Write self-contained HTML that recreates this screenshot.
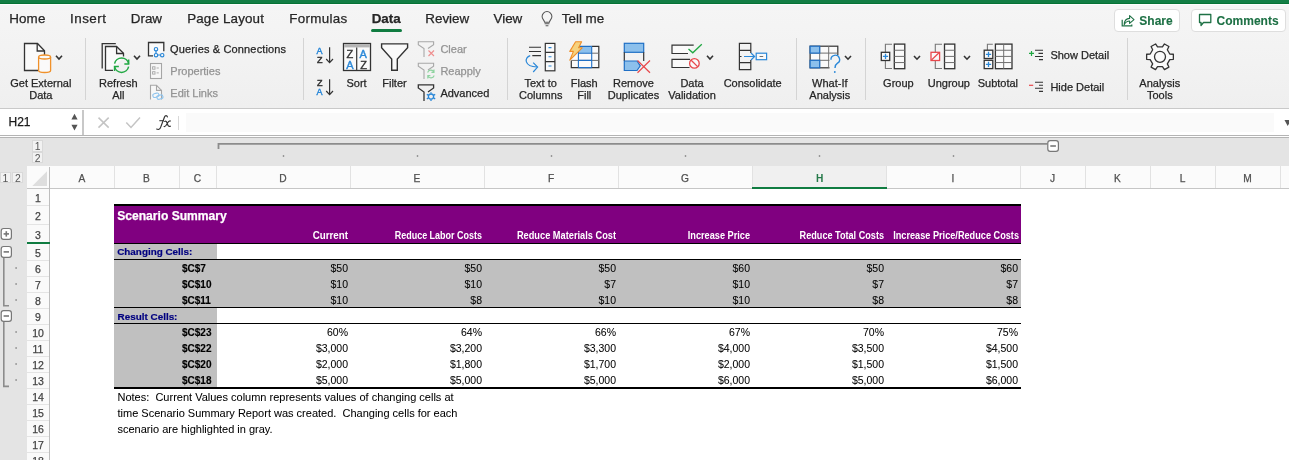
<!DOCTYPE html>
<html><head><meta charset="utf-8"><style>
html,body{margin:0;padding:0;}
body{width:1289px;height:460px;overflow:hidden;position:relative;background:#f3f3f3;font-family:"Liberation Sans", sans-serif;}
.t{position:absolute;white-space:pre;-webkit-text-stroke:0.25px currentColor;}
body{will-change:transform;}
.r{position:absolute;}
svg{position:absolute;left:0;top:0;}
</style></head><body>
<div class="r" style="left:0px;top:0px;width:1289px;height:3px;background:#137e45;"></div><div class="r" style="left:0px;top:3px;width:1289px;height:1px;background:#067335;"></div><div class="r" style="left:0px;top:4px;width:1289px;height:1px;background:#fdfdfd;"></div><div class="r" style="left:0px;top:5px;width:1289px;height:103px;background:linear-gradient(#f5f5f5,#f3f3f3 40%,#efefef);"></div><div class="r" style="left:0px;top:108px;width:1289px;height:1px;background:#c9c9c9;"></div><div class="r" style="left:0px;top:109px;width:1289px;height:26px;background:#ffffff;"></div><div class="r" style="left:0px;top:135px;width:1289px;height:1px;background:#b4b4b4;"></div><div class="r" style="left:0px;top:136px;width:1289px;height:1px;background:#ffffff;"></div><div class="r" style="left:0px;top:137px;width:1289px;height:1px;background:#b4b4b4;"></div><div class="r" style="left:0px;top:138px;width:1289px;height:322px;background:#e4e4e4;"></div><div class="t" style="left:9.20px;top:11.66px;width:400px;font-size:13.4px;line-height:13.4px;color:#262626;text-align:left;letter-spacing:0.15px;">Home</div><div class="t" style="left:70.00px;top:11.66px;width:400px;font-size:13.4px;line-height:13.4px;color:#262626;text-align:left;letter-spacing:0.5px;">Insert</div><div class="t" style="left:130.80px;top:11.66px;width:400px;font-size:13.4px;line-height:13.4px;color:#262626;text-align:left;">Draw</div><div class="t" style="left:187.20px;top:11.66px;width:400px;font-size:13.4px;line-height:13.4px;color:#262626;text-align:left;letter-spacing:0.15px;">Page Layout</div><div class="t" style="left:289.20px;top:11.66px;width:400px;font-size:13.4px;line-height:13.4px;color:#262626;text-align:left;letter-spacing:0.3px;">Formulas</div><div class="t" style="left:371.70px;top:11.66px;width:400px;font-size:13.4px;line-height:13.4px;color:#262626;text-align:left;font-weight:bold;">Data</div><div class="r" style="left:371px;top:29px;width:31px;height:3px;background:#107c41;border-radius:1.5px;"></div><div class="t" style="left:425.30px;top:11.66px;width:400px;font-size:13.4px;line-height:13.4px;color:#262626;text-align:left;">Review</div><div class="t" style="left:493.50px;top:11.66px;width:400px;font-size:13.4px;line-height:13.4px;color:#262626;text-align:left;">View</div><div class="t" style="left:561.80px;top:11.66px;width:400px;font-size:13.4px;line-height:13.4px;color:#262626;text-align:left;">Tell me</div><div class="r" style="left:1113.5px;top:8.5px;width:66px;height:23px;background:#ffffff;border:1px solid #dedede;border-radius:4px;box-sizing:border-box;"></div><div class="r" style="left:1190.5px;top:8.5px;width:95px;height:23px;background:#ffffff;border:1px solid #dedede;border-radius:4px;box-sizing:border-box;"></div><div class="t" style="left:1139.30px;top:15.04px;width:400px;font-size:12px;line-height:12px;color:#1e7145;text-align:left;font-weight:bold;-webkit-text-stroke:0.1px #1e7145;">Share</div><div class="t" style="left:1216.60px;top:15.04px;width:400px;font-size:12px;line-height:12px;color:#1e7145;text-align:left;font-weight:bold;-webkit-text-stroke:0.1px #1e7145;">Comments</div><div class="t" style="left:-19.20px;top:77.69px;width:120px;font-size:11px;line-height:11px;color:#262626;text-align:center;">Get External</div><div class="t" style="left:-19.20px;top:90.09px;width:120px;font-size:11px;line-height:11px;color:#262626;text-align:center;">Data</div><div class="t" style="left:58.30px;top:77.69px;width:120px;font-size:11px;line-height:11px;color:#262626;text-align:center;">Refresh</div><div class="t" style="left:58.30px;top:90.09px;width:120px;font-size:11px;line-height:11px;color:#262626;text-align:center;">All</div><div class="t" style="left:170.00px;top:43.59px;width:400px;font-size:11px;line-height:11px;color:#262626;text-align:left;letter-spacing:0.15px;">Queries &amp; Connections</div><div class="t" style="left:170.30px;top:65.79px;width:400px;font-size:11px;line-height:11px;color:#939393;text-align:left;">Properties</div><div class="t" style="left:170.30px;top:88.29px;width:400px;font-size:11px;line-height:11px;color:#939393;text-align:left;">Edit Links</div><div class="t" style="left:296.60px;top:77.69px;width:120px;font-size:11px;line-height:11px;color:#262626;text-align:center;">Sort</div><div class="t" style="left:334.50px;top:77.69px;width:120px;font-size:11px;line-height:11px;color:#262626;text-align:center;">Filter</div><div class="t" style="left:440.40px;top:44.19px;width:400px;font-size:11px;line-height:11px;color:#939393;text-align:left;">Clear</div><div class="t" style="left:440.40px;top:65.99px;width:400px;font-size:11px;line-height:11px;color:#939393;text-align:left;">Reapply</div><div class="t" style="left:440.40px;top:87.59px;width:400px;font-size:11px;line-height:11px;color:#262626;text-align:left;">Advanced</div><div class="t" style="left:480.70px;top:77.69px;width:120px;font-size:11px;line-height:11px;color:#262626;text-align:center;">Text to</div><div class="t" style="left:480.70px;top:90.09px;width:120px;font-size:11px;line-height:11px;color:#262626;text-align:center;">Columns</div><div class="t" style="left:524.30px;top:77.69px;width:120px;font-size:11px;line-height:11px;color:#262626;text-align:center;">Flash</div><div class="t" style="left:524.30px;top:90.09px;width:120px;font-size:11px;line-height:11px;color:#262626;text-align:center;">Fill</div><div class="t" style="left:573.50px;top:77.69px;width:120px;font-size:11px;line-height:11px;color:#262626;text-align:center;">Remove</div><div class="t" style="left:573.50px;top:90.09px;width:120px;font-size:11px;line-height:11px;color:#262626;text-align:center;">Duplicates</div><div class="t" style="left:632.00px;top:77.69px;width:120px;font-size:11px;line-height:11px;color:#262626;text-align:center;">Data</div><div class="t" style="left:632.00px;top:90.09px;width:120px;font-size:11px;line-height:11px;color:#262626;text-align:center;">Validation</div><div class="t" style="left:692.70px;top:77.69px;width:120px;font-size:11px;line-height:11px;color:#262626;text-align:center;">Consolidate</div><div class="t" style="left:769.80px;top:77.69px;width:120px;font-size:11px;line-height:11px;color:#262626;text-align:center;">What-If</div><div class="t" style="left:769.80px;top:90.09px;width:120px;font-size:11px;line-height:11px;color:#262626;text-align:center;">Analysis</div><div class="t" style="left:838.40px;top:77.69px;width:120px;font-size:11px;line-height:11px;color:#262626;text-align:center;">Group</div><div class="t" style="left:888.90px;top:77.69px;width:120px;font-size:11px;line-height:11px;color:#262626;text-align:center;">Ungroup</div><div class="t" style="left:937.90px;top:77.69px;width:120px;font-size:11px;line-height:11px;color:#262626;text-align:center;">Subtotal</div><div class="t" style="left:1050.40px;top:49.69px;width:400px;font-size:11px;line-height:11px;color:#262626;text-align:left;">Show Detail</div><div class="t" style="left:1050.40px;top:81.99px;width:400px;font-size:11px;line-height:11px;color:#262626;text-align:left;">Hide Detail</div><div class="t" style="left:1099.80px;top:77.69px;width:120px;font-size:11px;line-height:11px;color:#262626;text-align:center;">Analysis</div><div class="t" style="left:1099.80px;top:90.09px;width:120px;font-size:11px;line-height:11px;color:#262626;text-align:center;">Tools</div><div class="r" style="left:84.5px;top:38px;width:1px;height:62px;background:#d4d4d4;"></div><div class="r" style="left:302.5px;top:38px;width:1px;height:62px;background:#d4d4d4;"></div><div class="r" style="left:506.5px;top:38px;width:1px;height:62px;background:#d4d4d4;"></div><div class="r" style="left:795.5px;top:38px;width:1px;height:62px;background:#d4d4d4;"></div><div class="r" style="left:864.5px;top:38px;width:1px;height:62px;background:#d4d4d4;"></div><div class="r" style="left:1126.5px;top:38px;width:1px;height:62px;background:#d4d4d4;"></div><div class="t" style="left:8.50px;top:116.14px;width:400px;font-size:12px;line-height:12px;color:#1a1a1a;text-align:left;">H21</div><div class="r" style="left:82px;top:110px;width:2px;height:25px;background:#c8c8c8;"></div><div class="r" style="left:178px;top:115.5px;width:1px;height:14px;background:#d8d8d8;"></div><div class="r" style="left:186px;top:113px;width:1088px;height:19px;background:#fafafa;"></div><div class="r" style="left:26.5px;top:166px;width:1262.5px;height:22px;background:#fbfbfb;"></div><div class="r" style="left:26.5px;top:188px;width:1262.5px;height:1px;background:#c6c6c6;"></div><div class="r" style="left:752px;top:166px;width:134px;height:22px;background:#f0f0f0;"></div><div class="r" style="left:114px;top:166px;width:1px;height:22px;background:#e2e2e2;"></div><div class="t" style="left:62.00px;top:174.37px;width:40px;font-size:10.2px;line-height:10.2px;color:#505050;text-align:center;">A</div><div class="r" style="left:179px;top:166px;width:1px;height:22px;background:#e2e2e2;"></div><div class="t" style="left:126.50px;top:174.37px;width:40px;font-size:10.2px;line-height:10.2px;color:#505050;text-align:center;">B</div><div class="r" style="left:216px;top:166px;width:1px;height:22px;background:#e2e2e2;"></div><div class="t" style="left:177.50px;top:174.37px;width:40px;font-size:10.2px;line-height:10.2px;color:#505050;text-align:center;">C</div><div class="r" style="left:350px;top:166px;width:1px;height:22px;background:#e2e2e2;"></div><div class="t" style="left:263.00px;top:174.37px;width:40px;font-size:10.2px;line-height:10.2px;color:#505050;text-align:center;">D</div><div class="r" style="left:484px;top:166px;width:1px;height:22px;background:#e2e2e2;"></div><div class="t" style="left:397.00px;top:174.37px;width:40px;font-size:10.2px;line-height:10.2px;color:#505050;text-align:center;">E</div><div class="r" style="left:618px;top:166px;width:1px;height:22px;background:#e2e2e2;"></div><div class="t" style="left:531.00px;top:174.37px;width:40px;font-size:10.2px;line-height:10.2px;color:#505050;text-align:center;">F</div><div class="r" style="left:752px;top:166px;width:1px;height:22px;background:#e2e2e2;"></div><div class="t" style="left:665.00px;top:174.37px;width:40px;font-size:10.2px;line-height:10.2px;color:#505050;text-align:center;">G</div><div class="r" style="left:886px;top:166px;width:1px;height:22px;background:#e2e2e2;"></div><div class="t" style="left:799.70px;top:174.37px;width:40px;font-size:10.2px;line-height:10.2px;color:#267a4a;text-align:center;font-weight:bold;-webkit-text-stroke:0;">H</div><div class="r" style="left:1020px;top:166px;width:1px;height:22px;background:#e2e2e2;"></div><div class="t" style="left:933.00px;top:174.37px;width:40px;font-size:10.2px;line-height:10.2px;color:#505050;text-align:center;">I</div><div class="r" style="left:1085px;top:166px;width:1px;height:22px;background:#e2e2e2;"></div><div class="t" style="left:1032.50px;top:174.37px;width:40px;font-size:10.2px;line-height:10.2px;color:#505050;text-align:center;">J</div><div class="r" style="left:1150px;top:166px;width:1px;height:22px;background:#e2e2e2;"></div><div class="t" style="left:1097.50px;top:174.37px;width:40px;font-size:10.2px;line-height:10.2px;color:#505050;text-align:center;">K</div><div class="r" style="left:1215px;top:166px;width:1px;height:22px;background:#e2e2e2;"></div><div class="t" style="left:1162.50px;top:174.37px;width:40px;font-size:10.2px;line-height:10.2px;color:#505050;text-align:center;">L</div><div class="r" style="left:1280px;top:166px;width:1px;height:22px;background:#e2e2e2;"></div><div class="t" style="left:1227.50px;top:174.37px;width:40px;font-size:10.2px;line-height:10.2px;color:#505050;text-align:center;">M</div><div class="r" style="left:1345px;top:166px;width:1px;height:22px;background:#e2e2e2;"></div><div class="r" style="left:752px;top:187px;width:135px;height:2px;background:#107c41;"></div><div class="r" style="left:49px;top:167px;width:1px;height:293px;background:#bdbdbd;"></div><div class="r" style="left:26.5px;top:189px;width:22.5px;height:271px;background:#fafafa;"></div><div class="r" style="left:50px;top:189px;width:1239px;height:271px;background:#ffffff;"></div><div class="r" style="left:26.5px;top:205px;width:22.5px;height:1px;background:#e4e4e4;"></div><div class="t" style="left:23.00px;top:193.11px;width:30px;font-size:10.5px;line-height:10.5px;color:#444;text-align:center;">1</div><div class="r" style="left:26.5px;top:224px;width:22.5px;height:1px;background:#e4e4e4;"></div><div class="t" style="left:23.00px;top:210.61px;width:30px;font-size:10.5px;line-height:10.5px;color:#444;text-align:center;">2</div><div class="r" style="left:26.5px;top:242px;width:22.5px;height:1px;background:#e4e4e4;"></div><div class="t" style="left:23.00px;top:229.81px;width:30px;font-size:10.5px;line-height:10.5px;color:#444;text-align:center;">3</div><div class="r" style="left:26.5px;top:260px;width:22.5px;height:1px;background:#e4e4e4;"></div><div class="t" style="left:23.00px;top:248.11px;width:30px;font-size:10.5px;line-height:10.5px;color:#444;text-align:center;">5</div><div class="r" style="left:26.5px;top:276px;width:22.5px;height:1px;background:#e4e4e4;"></div><div class="t" style="left:23.00px;top:264.11px;width:30px;font-size:10.5px;line-height:10.5px;color:#444;text-align:center;">6</div><div class="r" style="left:26.5px;top:292px;width:22.5px;height:1px;background:#e4e4e4;"></div><div class="t" style="left:23.00px;top:280.11px;width:30px;font-size:10.5px;line-height:10.5px;color:#444;text-align:center;">7</div><div class="r" style="left:26.5px;top:308px;width:22.5px;height:1px;background:#e4e4e4;"></div><div class="t" style="left:23.00px;top:296.11px;width:30px;font-size:10.5px;line-height:10.5px;color:#444;text-align:center;">8</div><div class="r" style="left:26.5px;top:324px;width:22.5px;height:1px;background:#e4e4e4;"></div><div class="t" style="left:23.00px;top:312.11px;width:30px;font-size:10.5px;line-height:10.5px;color:#444;text-align:center;">9</div><div class="r" style="left:26.5px;top:340px;width:22.5px;height:1px;background:#e4e4e4;"></div><div class="t" style="left:23.00px;top:328.11px;width:30px;font-size:10.5px;line-height:10.5px;color:#444;text-align:center;">10</div><div class="r" style="left:26.5px;top:356px;width:22.5px;height:1px;background:#e4e4e4;"></div><div class="t" style="left:23.00px;top:344.11px;width:30px;font-size:10.5px;line-height:10.5px;color:#444;text-align:center;">11</div><div class="r" style="left:26.5px;top:372px;width:22.5px;height:1px;background:#e4e4e4;"></div><div class="t" style="left:23.00px;top:360.11px;width:30px;font-size:10.5px;line-height:10.5px;color:#444;text-align:center;">12</div><div class="r" style="left:26.5px;top:388px;width:22.5px;height:1px;background:#e4e4e4;"></div><div class="t" style="left:23.00px;top:376.11px;width:30px;font-size:10.5px;line-height:10.5px;color:#444;text-align:center;">13</div><div class="r" style="left:26.5px;top:404px;width:22.5px;height:1px;background:#e4e4e4;"></div><div class="t" style="left:23.00px;top:392.11px;width:30px;font-size:10.5px;line-height:10.5px;color:#444;text-align:center;">14</div><div class="r" style="left:26.5px;top:420px;width:22.5px;height:1px;background:#e4e4e4;"></div><div class="t" style="left:23.00px;top:408.11px;width:30px;font-size:10.5px;line-height:10.5px;color:#444;text-align:center;">15</div><div class="r" style="left:26.5px;top:436px;width:22.5px;height:1px;background:#e4e4e4;"></div><div class="t" style="left:23.00px;top:424.11px;width:30px;font-size:10.5px;line-height:10.5px;color:#444;text-align:center;">16</div><div class="r" style="left:26.5px;top:452px;width:22.5px;height:1px;background:#e4e4e4;"></div><div class="t" style="left:23.00px;top:440.11px;width:30px;font-size:10.5px;line-height:10.5px;color:#444;text-align:center;">17</div><div class="r" style="left:26.5px;top:468px;width:22.5px;height:1px;background:#e4e4e4;"></div><div class="t" style="left:23.00px;top:456.11px;width:30px;font-size:10.5px;line-height:10.5px;color:#444;text-align:center;">18</div><div class="r" style="left:26.5px;top:242px;width:23px;height:2px;background:#107c41;"></div><div class="r" style="left:114px;top:204px;width:907px;height:2px;background:#000;"></div><div class="r" style="left:114px;top:206px;width:907px;height:37px;background:#800080;"></div><div class="r" style="left:114px;top:243px;width:907px;height:1px;background:#000;"></div><div class="r" style="left:114px;top:244px;width:103px;height:15px;background:#c0c0c0;"></div><div class="r" style="left:114px;top:259px;width:907px;height:1px;background:#000;"></div><div class="r" style="left:114px;top:260px;width:907px;height:47px;background:#c0c0c0;"></div><div class="r" style="left:114px;top:307px;width:907px;height:1px;background:#000;"></div><div class="r" style="left:114px;top:308px;width:103px;height:15px;background:#c0c0c0;"></div><div class="r" style="left:114px;top:323px;width:907px;height:1px;background:#000;"></div><div class="r" style="left:114px;top:324px;width:103px;height:63px;background:#c0c0c0;"></div><div class="r" style="left:114px;top:387px;width:907px;height:2px;background:#000;"></div><div class="t" style="left:117.20px;top:209.86px;width:400px;font-size:12.1px;line-height:12.1px;color:#fff;text-align:left;font-weight:bold;">Scenario Summary</div><div class="t" style="left:148.00px;top:230.53px;width:200px;font-size:10px;line-height:10px;color:#fff;text-align:right;font-weight:bold;-webkit-text-stroke:0;transform:scaleX(0.9773);transform-origin:right center;">Current</div><div class="t" style="left:282.40px;top:230.53px;width:200px;font-size:10px;line-height:10px;color:#fff;text-align:right;font-weight:bold;-webkit-text-stroke:0;transform:scaleX(0.8977);transform-origin:right center;">Reduce Labor Costs</div><div class="t" style="left:416.20px;top:230.53px;width:200px;font-size:10px;line-height:10px;color:#fff;text-align:right;font-weight:bold;-webkit-text-stroke:0;transform:scaleX(0.9238);transform-origin:right center;">Reduce Materials Cost</div><div class="t" style="left:550.20px;top:230.53px;width:200px;font-size:10px;line-height:10px;color:#fff;text-align:right;font-weight:bold;-webkit-text-stroke:0;transform:scaleX(0.917);transform-origin:right center;">Increase Price</div><div class="t" style="left:684.30px;top:230.53px;width:200px;font-size:10px;line-height:10px;color:#fff;text-align:right;font-weight:bold;-webkit-text-stroke:0;transform:scaleX(0.9113);transform-origin:right center;">Reduce Total Costs</div><div class="t" style="left:818.50px;top:230.53px;width:200px;font-size:10px;line-height:10px;color:#fff;text-align:right;font-weight:bold;-webkit-text-stroke:0;transform:scaleX(0.9162);transform-origin:right center;">Increase Price/Reduce Costs</div><div class="t" style="left:117.20px;top:246.92px;width:400px;font-size:9.9px;line-height:9.9px;color:#000080;text-align:left;font-weight:bold;-webkit-text-stroke:0.2px #000080;">Changing Cells:</div><div class="t" style="left:117.60px;top:311.92px;width:400px;font-size:9.9px;line-height:9.9px;color:#000080;text-align:left;font-weight:bold;-webkit-text-stroke:0.2px #000080;">Result Cells:</div><div class="t" style="left:182.00px;top:263.74px;width:400px;font-size:10px;line-height:10px;color:#000;text-align:left;font-weight:bold;-webkit-text-stroke:0.15px #000;">$C$7</div><div class="t" style="left:248.00px;top:263.31px;width:100px;font-size:10.5px;line-height:10.5px;color:#000;text-align:right;-webkit-text-stroke:0.05px #000;">$50</div><div class="t" style="left:382.00px;top:263.31px;width:100px;font-size:10.5px;line-height:10.5px;color:#000;text-align:right;-webkit-text-stroke:0.05px #000;">$50</div><div class="t" style="left:516.00px;top:263.31px;width:100px;font-size:10.5px;line-height:10.5px;color:#000;text-align:right;-webkit-text-stroke:0.05px #000;">$50</div><div class="t" style="left:650.00px;top:263.31px;width:100px;font-size:10.5px;line-height:10.5px;color:#000;text-align:right;-webkit-text-stroke:0.05px #000;">$60</div><div class="t" style="left:784.00px;top:263.31px;width:100px;font-size:10.5px;line-height:10.5px;color:#000;text-align:right;-webkit-text-stroke:0.05px #000;">$50</div><div class="t" style="left:918.00px;top:263.31px;width:100px;font-size:10.5px;line-height:10.5px;color:#000;text-align:right;-webkit-text-stroke:0.05px #000;">$60</div><div class="t" style="left:182.00px;top:279.74px;width:400px;font-size:10px;line-height:10px;color:#000;text-align:left;font-weight:bold;-webkit-text-stroke:0.15px #000;">$C$10</div><div class="t" style="left:248.00px;top:279.31px;width:100px;font-size:10.5px;line-height:10.5px;color:#000;text-align:right;-webkit-text-stroke:0.05px #000;">$10</div><div class="t" style="left:382.00px;top:279.31px;width:100px;font-size:10.5px;line-height:10.5px;color:#000;text-align:right;-webkit-text-stroke:0.05px #000;">$10</div><div class="t" style="left:516.00px;top:279.31px;width:100px;font-size:10.5px;line-height:10.5px;color:#000;text-align:right;-webkit-text-stroke:0.05px #000;">$7</div><div class="t" style="left:650.00px;top:279.31px;width:100px;font-size:10.5px;line-height:10.5px;color:#000;text-align:right;-webkit-text-stroke:0.05px #000;">$10</div><div class="t" style="left:784.00px;top:279.31px;width:100px;font-size:10.5px;line-height:10.5px;color:#000;text-align:right;-webkit-text-stroke:0.05px #000;">$7</div><div class="t" style="left:918.00px;top:279.31px;width:100px;font-size:10.5px;line-height:10.5px;color:#000;text-align:right;-webkit-text-stroke:0.05px #000;">$7</div><div class="t" style="left:182.00px;top:295.74px;width:400px;font-size:10px;line-height:10px;color:#000;text-align:left;font-weight:bold;-webkit-text-stroke:0.15px #000;">$C$11</div><div class="t" style="left:248.00px;top:295.31px;width:100px;font-size:10.5px;line-height:10.5px;color:#000;text-align:right;-webkit-text-stroke:0.05px #000;">$10</div><div class="t" style="left:382.00px;top:295.31px;width:100px;font-size:10.5px;line-height:10.5px;color:#000;text-align:right;-webkit-text-stroke:0.05px #000;">$8</div><div class="t" style="left:516.00px;top:295.31px;width:100px;font-size:10.5px;line-height:10.5px;color:#000;text-align:right;-webkit-text-stroke:0.05px #000;">$10</div><div class="t" style="left:650.00px;top:295.31px;width:100px;font-size:10.5px;line-height:10.5px;color:#000;text-align:right;-webkit-text-stroke:0.05px #000;">$10</div><div class="t" style="left:784.00px;top:295.31px;width:100px;font-size:10.5px;line-height:10.5px;color:#000;text-align:right;-webkit-text-stroke:0.05px #000;">$8</div><div class="t" style="left:918.00px;top:295.31px;width:100px;font-size:10.5px;line-height:10.5px;color:#000;text-align:right;-webkit-text-stroke:0.05px #000;">$8</div><div class="t" style="left:182.00px;top:327.74px;width:400px;font-size:10px;line-height:10px;color:#000;text-align:left;font-weight:bold;-webkit-text-stroke:0.15px #000;">$C$23</div><div class="t" style="left:248.00px;top:327.31px;width:100px;font-size:10.5px;line-height:10.5px;color:#000;text-align:right;-webkit-text-stroke:0.05px #000;">60%</div><div class="t" style="left:382.00px;top:327.31px;width:100px;font-size:10.5px;line-height:10.5px;color:#000;text-align:right;-webkit-text-stroke:0.05px #000;">64%</div><div class="t" style="left:516.00px;top:327.31px;width:100px;font-size:10.5px;line-height:10.5px;color:#000;text-align:right;-webkit-text-stroke:0.05px #000;">66%</div><div class="t" style="left:650.00px;top:327.31px;width:100px;font-size:10.5px;line-height:10.5px;color:#000;text-align:right;-webkit-text-stroke:0.05px #000;">67%</div><div class="t" style="left:784.00px;top:327.31px;width:100px;font-size:10.5px;line-height:10.5px;color:#000;text-align:right;-webkit-text-stroke:0.05px #000;">70%</div><div class="t" style="left:918.00px;top:327.31px;width:100px;font-size:10.5px;line-height:10.5px;color:#000;text-align:right;-webkit-text-stroke:0.05px #000;">75%</div><div class="t" style="left:182.00px;top:343.74px;width:400px;font-size:10px;line-height:10px;color:#000;text-align:left;font-weight:bold;-webkit-text-stroke:0.15px #000;">$C$22</div><div class="t" style="left:248.00px;top:343.31px;width:100px;font-size:10.5px;line-height:10.5px;color:#000;text-align:right;-webkit-text-stroke:0.05px #000;">$3,000</div><div class="t" style="left:382.00px;top:343.31px;width:100px;font-size:10.5px;line-height:10.5px;color:#000;text-align:right;-webkit-text-stroke:0.05px #000;">$3,200</div><div class="t" style="left:516.00px;top:343.31px;width:100px;font-size:10.5px;line-height:10.5px;color:#000;text-align:right;-webkit-text-stroke:0.05px #000;">$3,300</div><div class="t" style="left:650.00px;top:343.31px;width:100px;font-size:10.5px;line-height:10.5px;color:#000;text-align:right;-webkit-text-stroke:0.05px #000;">$4,000</div><div class="t" style="left:784.00px;top:343.31px;width:100px;font-size:10.5px;line-height:10.5px;color:#000;text-align:right;-webkit-text-stroke:0.05px #000;">$3,500</div><div class="t" style="left:918.00px;top:343.31px;width:100px;font-size:10.5px;line-height:10.5px;color:#000;text-align:right;-webkit-text-stroke:0.05px #000;">$4,500</div><div class="t" style="left:182.00px;top:359.74px;width:400px;font-size:10px;line-height:10px;color:#000;text-align:left;font-weight:bold;-webkit-text-stroke:0.15px #000;">$C$20</div><div class="t" style="left:248.00px;top:359.31px;width:100px;font-size:10.5px;line-height:10.5px;color:#000;text-align:right;-webkit-text-stroke:0.05px #000;">$2,000</div><div class="t" style="left:382.00px;top:359.31px;width:100px;font-size:10.5px;line-height:10.5px;color:#000;text-align:right;-webkit-text-stroke:0.05px #000;">$1,800</div><div class="t" style="left:516.00px;top:359.31px;width:100px;font-size:10.5px;line-height:10.5px;color:#000;text-align:right;-webkit-text-stroke:0.05px #000;">$1,700</div><div class="t" style="left:650.00px;top:359.31px;width:100px;font-size:10.5px;line-height:10.5px;color:#000;text-align:right;-webkit-text-stroke:0.05px #000;">$2,000</div><div class="t" style="left:784.00px;top:359.31px;width:100px;font-size:10.5px;line-height:10.5px;color:#000;text-align:right;-webkit-text-stroke:0.05px #000;">$1,500</div><div class="t" style="left:918.00px;top:359.31px;width:100px;font-size:10.5px;line-height:10.5px;color:#000;text-align:right;-webkit-text-stroke:0.05px #000;">$1,500</div><div class="t" style="left:182.00px;top:375.74px;width:400px;font-size:10px;line-height:10px;color:#000;text-align:left;font-weight:bold;-webkit-text-stroke:0.15px #000;">$C$18</div><div class="t" style="left:248.00px;top:375.31px;width:100px;font-size:10.5px;line-height:10.5px;color:#000;text-align:right;-webkit-text-stroke:0.05px #000;">$5,000</div><div class="t" style="left:382.00px;top:375.31px;width:100px;font-size:10.5px;line-height:10.5px;color:#000;text-align:right;-webkit-text-stroke:0.05px #000;">$5,000</div><div class="t" style="left:516.00px;top:375.31px;width:100px;font-size:10.5px;line-height:10.5px;color:#000;text-align:right;-webkit-text-stroke:0.05px #000;">$5,000</div><div class="t" style="left:650.00px;top:375.31px;width:100px;font-size:10.5px;line-height:10.5px;color:#000;text-align:right;-webkit-text-stroke:0.05px #000;">$6,000</div><div class="t" style="left:784.00px;top:375.31px;width:100px;font-size:10.5px;line-height:10.5px;color:#000;text-align:right;-webkit-text-stroke:0.05px #000;">$5,000</div><div class="t" style="left:918.00px;top:375.31px;width:100px;font-size:10.5px;line-height:10.5px;color:#000;text-align:right;-webkit-text-stroke:0.05px #000;">$6,000</div><div class="t" style="left:117.50px;top:391.89px;width:400px;font-size:11px;line-height:11px;color:#000;text-align:left;-webkit-text-stroke:0.05px #000;">Notes:&nbsp; Current Values column represents values of changing cells at</div><div class="t" style="left:117.50px;top:407.89px;width:400px;font-size:11px;line-height:11px;color:#000;text-align:left;-webkit-text-stroke:0.05px #000;">time Scenario Summary Report was created.&nbsp; Changing cells for each</div><div class="t" style="left:117.50px;top:423.89px;width:400px;font-size:11px;line-height:11px;color:#000;text-align:left;-webkit-text-stroke:0.05px #000;">scenario are highlighted in gray.</div><div class="r" style="left:32.2px;top:140.2px;width:10.8px;height:11.5px;background:#f2f2f2;box-sizing:border-box;border:1px solid #d9d9d9;"></div><div class="t" style="left:27.60px;top:142.15px;width:20px;font-size:10.4px;line-height:10.4px;color:#555;text-align:center;-webkit-text-stroke:0;">1</div><div class="r" style="left:32.2px;top:152.3px;width:10.8px;height:10.8px;background:#f2f2f2;box-sizing:border-box;border:1px solid #d9d9d9;"></div><div class="t" style="left:27.60px;top:153.90px;width:20px;font-size:10.4px;line-height:10.4px;color:#555;text-align:center;-webkit-text-stroke:0;">2</div><div class="r" style="left:0px;top:172.2px;width:10.8px;height:11.1px;background:#f2f2f2;box-sizing:border-box;border:1px solid #d9d9d9;"></div><div class="t" style="left:-4.60px;top:173.95px;width:20px;font-size:10.4px;line-height:10.4px;color:#555;text-align:center;-webkit-text-stroke:0;">1</div><div class="r" style="left:12.4px;top:172.2px;width:10.8px;height:11.1px;background:#f2f2f2;box-sizing:border-box;border:1px solid #d9d9d9;"></div><div class="t" style="left:7.80px;top:173.95px;width:20px;font-size:10.4px;line-height:10.4px;color:#555;text-align:center;-webkit-text-stroke:0;">2</div>
<svg width="1289" height="460" viewBox="0 0 1289 460"><path d="M38 70.5 H24.5 V43.5 H37.5 L44.5 50.8 V55" fill="#fafafa" stroke="#333333" stroke-width="1.3"/><path d="M37.2 43.5 V51 H44.5" fill="none" stroke="#333333" stroke-width="1.3"/><path d="M38.6 57 V70.5 A6 2 0 0 0 50.6 70.5 V57" fill="#fafafa" stroke="#f0912a" stroke-width="1.3"/><ellipse cx="44.6" cy="57" rx="6" ry="2" fill="#fafafa" stroke="#f0912a" stroke-width="1.3"/><path d="M56 55.8 L59 59.0 L62 55.8" fill="none" stroke="#333333" stroke-width="1.6"/><path d="M102.2 68.6 V43.6 H115.8" fill="none" stroke="#333333" stroke-width="1.3"/><path d="M113 70.4 H105.5 V46.5 H116.5 L123.5 53.3 V56.5" fill="#fafafa" stroke="#333333" stroke-width="1.3"/><path d="M116.6 46.5 V53.5 H123.5" fill="none" stroke="#333333" stroke-width="1.3"/><path d="M114.56 63.70 A7.2 7.2 0 0 1 128.64 63.70" fill="none" stroke="#21a843" stroke-width="1.5"/><path d="M128.64 59.40 V63.90 H124.34" fill="none" stroke="#21a843" stroke-width="1.5"/><path d="M128.64 66.70 A7.2 7.2 0 0 1 114.56 66.70" fill="none" stroke="#21a843" stroke-width="1.5"/><path d="M114.56 71.00 V66.50 H118.86" fill="none" stroke="#21a843" stroke-width="1.5"/><path d="M134 55.8 L137 59.0 L140 55.8" fill="none" stroke="#333333" stroke-width="1.6"/><path d="M153 55.8 H148.5 V42.5 H163.8 V51.3" fill="#fafafa" stroke="#333333" stroke-width="1.3"/><path d="M156 49.7 V55 H162" fill="none" stroke="#2b88d8" stroke-width="1.2"/><circle cx="156" cy="49.2" r="1.7" fill="#fafafa" stroke="#2b88d8" stroke-width="1.2"/><circle cx="156" cy="55.2" r="1.7" fill="#fafafa" stroke="#2b88d8" stroke-width="1.2"/><circle cx="162.2" cy="55.2" r="1.7" fill="#fafafa" stroke="#2b88d8" stroke-width="1.2"/><rect x="150.5" y="63.5" width="11" height="15" fill="#f7f7f7" stroke="#a6a6a6" stroke-width="1.1"/><rect x="152.6" y="66.8" width="2.4" height="2.4" fill="none" stroke="#a6a6a6" stroke-width="0.9"/><rect x="152.6" y="71.7" width="2.4" height="2.4" fill="none" stroke="#a6a6a6" stroke-width="0.9"/><path d="M156.6 68 H158.8 M156.6 72.9 H158.8" stroke="#a6a6a6" stroke-width="0.9"/><path d="M150.5 99.5 V85.3 H156.5 L161.5 90.4 V99.5" fill="#f7f7f7" stroke="#a6a6a6" stroke-width="1.1"/><path d="M156.5 85.3 V90.4 H161.5" fill="none" stroke="#a6a6a6" stroke-width="1.1"/><rect x="152.8" y="93.4" width="6.2" height="3.8" rx="1.9" fill="none" stroke="#8ec4ee" stroke-width="1.1" transform="rotate(-15 155.9 95.3)"/><rect x="156.8" y="95.2" width="6.2" height="3.8" rx="1.9" fill="none" stroke="#8ec4ee" stroke-width="1.1" transform="rotate(-15 159.9 97.1)"/><text x="316.6" y="53.8" font-family="Liberation Sans" font-size="9" fill="#2b88d8" stroke="#2b88d8" stroke-width="0.45">A</text><text x="317" y="62.5" font-family="Liberation Sans" font-size="9" fill="#333333" stroke="#333333" stroke-width="0.45">Z</text><path d="M329.6 47.2 V62.5 M326.2 59 L329.6 62.6 L333 59" fill="none" stroke="#333333" stroke-width="1.2"/><text x="317" y="85.7" font-family="Liberation Sans" font-size="9" fill="#333333" stroke="#333333" stroke-width="0.45">Z</text><text x="316.6" y="94.6" font-family="Liberation Sans" font-size="9" fill="#2b88d8" stroke="#2b88d8" stroke-width="0.45">A</text><path d="M329.6 79.2 V94.5 M326.2 91 L329.6 94.6 L333 91" fill="none" stroke="#333333" stroke-width="1.2"/><rect x="343.5" y="43.5" width="27" height="27" fill="#fafafa" stroke="#333333" stroke-width="1.3"/><rect x="344.1" y="44.1" width="25.8" height="3.3" fill="#b4b4b4"/><path d="M356.7 47.5 V70.5" stroke="#333333" stroke-width="1.2"/><text x="346.6" y="57.9" font-family="Liberation Sans" font-size="11" fill="#333333" stroke="#333333" stroke-width="0.4">Z</text><text x="346.2" y="68.5" font-family="Liberation Sans" font-size="11" fill="#2b88d8" stroke="#2b88d8" stroke-width="0.4">A</text><text x="359.6" y="57.9" font-family="Liberation Sans" font-size="11" fill="#2b88d8" stroke="#2b88d8" stroke-width="0.4">A</text><text x="360.2" y="68.5" font-family="Liberation Sans" font-size="11" fill="#333333" stroke="#333333" stroke-width="0.4">Z</text><path d="M381.6 43.9 H407.6 V47.7 L397.3 59 V70.2 H391.7 V59 L381.6 47.7 Z" fill="#fafafa" stroke="#333333" stroke-width="1.4" stroke-linejoin="miter"/><path d="M424 57 V48.5 L418.3 44.7 V41.8 H433.6 V44.7 L428 48.5" fill="none" stroke="#a8a8a8" stroke-width="1.1"/><path d="M428.5 50.5 L434 56 M434 50.5 L428.5 56" stroke="#ee8d8d" stroke-width="1.1"/><path d="M424 79 V70 L418.3 66.2 V63.3 H433.6 V66.2 L428 70" fill="none" stroke="#a8a8a8" stroke-width="1.1"/><path d="M427.6 72.5 A3.5 3.5 0 0 1 434 72 M434 69.6 V72.4 H431.4 M434.2 75.5 A3.5 3.5 0 0 1 427.8 76 M427.8 78.4 V75.6 H430.4" fill="none" stroke="#8fd3a0" stroke-width="1.1"/><path d="M424 101 V92 L418.3 88 V84.8 H433.6 V88 L428 92" fill="none" stroke="#333333" stroke-width="1.3"/><circle cx="431" cy="96.6" r="2.6" fill="none" stroke="#2b88d8" stroke-width="1.3"/><path d="M431 92.2 V93.6 M431 99.6 V101 M426.8 94.4 L428.2 95.1 M433.8 98.1 L435.2 98.8 M426.8 98.8 L428.2 98.1 M433.8 95.1 L435.2 94.4" stroke="#2b88d8" stroke-width="1.3"/><path d="M529 47.2 H541 M529 51.5 H541 M532.3 55.6 H541" stroke="#333333" stroke-width="1.1"/><path d="M530.2 55.6 C 524 57.5, 524 66.5, 537 67" fill="none" stroke="#2b88d8" stroke-width="1.2"/><path d="M533.2 62.6 L537.6 67.1 L533.2 72" fill="none" stroke="#2b88d8" stroke-width="1.2"/><rect x="545.3" y="43.4" width="9.6" height="27.4" fill="#fafafa" stroke="#333333" stroke-width="1.2"/><path d="M545.3 52.4 H555 M545.3 61.6 H555" stroke="#333333" stroke-width="1.2"/><path d="M548.5 47.6 H551.5 M548.5 56.8 H551.5 M548.5 66 H551.5" stroke="#2b88d8" stroke-width="1.1"/><rect x="571.3" y="46.4" width="27.5" height="21.2" fill="#fafafa"/><path d="M591.7 46.4 H598.8 V67.6 H571.3 V60.4" fill="none" stroke="#333333" stroke-width="1.2"/><path d="M571.3 60.4 H598.8 M591.7 53.2 H598.8" stroke="#6f6f6f" stroke-width="1"/><rect x="578.4" y="46.4" width="13.3" height="6.8" fill="#8cc0ec"/><path d="M578.4 46.4 V67.6 M591.7 46.4 V67.6 M578.4 53.2 H591.7 M578.4 60.4 H591.7 M578.4 67.6 H591.7 M578.4 46.4 H591.7" fill="none" stroke="#1f6fc5" stroke-width="1.1"/><path d="M575.6 41.8 H581.6 L578.6 47.8 H582.2 L569.8 60.2 L573.4 51.4 H569.8 Z" fill="#f6d27e" stroke="#ef8e27" stroke-width="1.1" stroke-linejoin="round"/><rect x="624.3" y="43.3" width="19.4" height="9" fill="#8cc0ec" stroke="#1f6fc5" stroke-width="1.2"/><path d="M624.3 52.3 V61 M643.7 52.3 V61" stroke="#333333" stroke-width="1.2"/><path d="M624.3 61 H637 L640.3 65.8 L637 70.5 H624.3 Z" fill="#8cc0ec" stroke="#1f6fc5" stroke-width="1.2"/><path d="M637.5 60.5 L650 72.7 M650 60.5 L637.5 72.7" stroke="#e8484c" stroke-width="1.2"/><path d="M688 53.5 H672 V45.2 H693.7" fill="#fafafa" stroke="#333333" stroke-width="1.2"/><path d="M688.5 48.9 L692.8 52.8 L701.8 44.2" fill="none" stroke="#21a843" stroke-width="1.3"/><path d="M689.5 67.5 H672 V59.3 H690" fill="#fafafa" stroke="#333333" stroke-width="1.2"/><circle cx="694.4" cy="63.4" r="4.8" fill="#fafafa" stroke="#e8484c" stroke-width="1.3"/><path d="M691.2 60.2 L697.6 66.6" stroke="#e8484c" stroke-width="1.3"/><path d="M707 55.8 L710 59.0 L713 55.8" fill="none" stroke="#333333" stroke-width="1.6"/><path d="M750.8 53 V50.4 M750.8 60 V62.6 M739.4 43.3 H750.8 V50.4 H739.4 Z M739.4 62.6 H750.8 V69.6 H739.4 Z M739.4 50.4 V62.6 M739.4 56.5 H741.5" fill="none" stroke="#333333" stroke-width="1.2"/><path d="M744 56.5 H754.5 M751 53 L754.6 56.5 L751 60" fill="none" stroke="#2b88d8" stroke-width="1.2"/><rect x="756.2" y="53.2" width="10.4" height="6.5" fill="#fafafa" stroke="#2b88d8" stroke-width="1.2"/><path d="M759.6 56.5 H763.2" stroke="#6f6f6f" stroke-width="1"/><rect x="810.1" y="46.2" width="27.7" height="21.6" fill="#fafafa" stroke="#333333" stroke-width="1.2"/><path d="M819.7 46.2 V67.8 M828.7 46.2 V67.8 M810.1 53.1 H837.8 M810.1 60.3 H837.8" stroke="#6f6f6f" stroke-width="1"/><rect x="810.1" y="46.2" width="9.6" height="6.9" fill="#8cc0ec" stroke="#1f6fc5" stroke-width="1.2"/><rect x="810.1" y="60.3" width="9.6" height="7.5" fill="#8cc0ec" stroke="#1f6fc5" stroke-width="1.2"/><rect x="829.5" y="55" width="11" height="17" fill="#f3f3f3"/><path d="M831 59.8 A4.3 4.3 0 1 1 837.5 63.2 C 835.5 64.5, 835 65.5, 835 68" fill="none" stroke="#2b88d8" stroke-width="1.4"/><circle cx="834.8" cy="72" r="0.9" fill="#2b88d8"/><path d="M845 56 L848 59.2 L851 56" fill="none" stroke="#333333" stroke-width="1.6"/><path d="M892 44.3 H885.4 V68.5 H892" fill="none" stroke="#777" stroke-width="1.1"/><rect x="881.3" y="52.3" width="8.4" height="8.2" fill="#fafafa" stroke="#333333" stroke-width="1.3"/><path d="M882.9 56.4 H888.1 M885.5 53.8 V59.0" stroke="#2b88d8" stroke-width="1.3"/><rect x="894.3" y="44.1" width="10.5" height="24.6" fill="#fafafa" stroke="#333333" stroke-width="1.3"/><path d="M894.3 50.25 H904.8" stroke="#6f6f6f" stroke-width="1"/><path d="M894.3 56.40 H904.8" stroke="#6f6f6f" stroke-width="1"/><path d="M894.3 62.55 H904.8" stroke="#6f6f6f" stroke-width="1"/><path d="M914 56 L917 59.2 L920 56" fill="none" stroke="#333333" stroke-width="1.6"/><path d="M942 44.3 H935.3 V68.5 H942" fill="none" stroke="#777" stroke-width="1.1"/><rect x="931" y="52.3" width="8.6" height="8.2" fill="#fafafa" stroke="#e8484c" stroke-width="1.3"/><path d="M931.5 60 L939 52.8" stroke="#e8484c" stroke-width="1.2"/><rect x="944.5" y="44.1" width="10.3" height="24.6" fill="#fafafa" stroke="#333333" stroke-width="1.3"/><path d="M944.5 50.25 H954.8" stroke="#6f6f6f" stroke-width="1"/><path d="M944.5 56.40 H954.8" stroke="#6f6f6f" stroke-width="1"/><path d="M944.5 62.55 H954.8" stroke="#6f6f6f" stroke-width="1"/><path d="M964 56 L967 59.2 L970 56" fill="none" stroke="#333333" stroke-width="1.6"/><path d="M992.8 44.3 H987.4 V50" fill="none" stroke="#777" stroke-width="1.1"/><rect x="984.2" y="50.2" width="8.6" height="8.3" fill="#fafafa" stroke="#333333" stroke-width="1.3"/><path d="M985.9 54.35 H991.1 M988.5 51.75 V56.95" stroke="#2b88d8" stroke-width="1.3"/><rect x="984.2" y="60.3" width="8.6" height="8.3" fill="#fafafa" stroke="#333333" stroke-width="1.3"/><path d="M985.9 64.45 H991.1 M988.5 61.85 V67.05" stroke="#2b88d8" stroke-width="1.3"/><rect x="995.4" y="44.1" width="16.6" height="24.6" fill="#fafafa" stroke="#333333" stroke-width="1.3"/><path d="M995.4 50.25 H1012.0" stroke="#6f6f6f" stroke-width="1"/><path d="M995.4 56.40 H1012.0" stroke="#6f6f6f" stroke-width="1"/><path d="M995.4 62.55 H1012.0" stroke="#6f6f6f" stroke-width="1"/><path d="M1003.70 44.1 V68.7" stroke="#6f6f6f" stroke-width="1"/><path d="M1029 53.4 H1034 M1031.5 50.9 V55.9" stroke="#21a843" stroke-width="1.2"/><path d="M1035 50.3 H1043 M1038.5 53.4 H1043 M1035 56.5 H1043 M1039 59.6 H1043" stroke="#333333" stroke-width="1.1"/><path d="M1029 85.3 H1033.2" stroke="#e8484c" stroke-width="1.2"/><path d="M1035 82.3 H1043 M1039 85.3 H1043 M1035 88.3 H1043 M1039 91.4 H1043" stroke="#333333" stroke-width="1.1"/><path d="M1169.80 53.98 L1173.36 54.23 L1173.36 59.37 L1169.80 59.62 L1167.34 63.88 L1168.90 67.08 L1164.45 69.65 L1162.46 66.70 L1157.54 66.70 L1155.55 69.65 L1151.10 67.08 L1152.66 63.88 L1150.20 59.62 L1146.64 59.37 L1146.64 54.23 L1150.20 53.98 L1152.66 49.72 L1151.10 46.52 L1155.55 43.95 L1157.54 46.90 L1162.46 46.90 L1164.45 43.95 L1168.90 46.52 L1167.34 49.72 Z" fill="#fafafa" stroke="#333333" stroke-width="1.3" stroke-linejoin="round"/><circle cx="1160" cy="56.8" r="5.5" fill="#fafafa" stroke="#333333" stroke-width="1.3"/><path d="M544.6 22.2 C 544.4 20.2, 542.1 19.2, 542.1 16.5 A4.9 4.9 0 0 1 551.9 16.5 C 551.9 19.2, 549.6 20.2, 549.4 22.2 Z" fill="none" stroke="#555" stroke-width="1.05"/><path d="M544.6 23.8 H549.4 M545.6 25.8 H548.4" stroke="#555" stroke-width="1.05"/><path d="M1122.2 19.8 V25.9 H1131.8 V24.4" fill="none" stroke="#1e7145" stroke-width="1.2"/><path d="M1124.2 24.6 C 1124.4 20.6, 1126.4 18.6, 1129.6 18.4 V15.6 L1134 19.6 L1129.6 23.4 V21 C 1127.4 21, 1125.6 22.2, 1124.2 24.6 Z" fill="none" stroke="#1e7145" stroke-width="1.1" stroke-linejoin="round"/><path d="M1199.5 14.5 H1210.8 V22.5 H1203.5 L1201 25.5 V22.5 H1199.5 Z" fill="none" stroke="#1e7145" stroke-width="1.3" stroke-linejoin="round"/><path d="M71.4 119.4 L74.5 113.8 L77.6 119.4 Z M71.4 124.8 L77.6 124.8 L74.5 130.5 Z" fill="#555"/><path d="M98.5 117.6 L108.7 127.6 M108.7 117.6 L98.5 127.6" stroke="#c4c4c4" stroke-width="1.5"/><path d="M126.3 122.5 L131 127.5 L140 117.6" fill="none" stroke="#c4c4c4" stroke-width="1.5"/><path d="M167.4 116.9 C 167 115.3, 165.2 115.2, 164.5 117 L 160.6 127.4 C 159.9 129.3, 158.2 130, 156.7 129.1" fill="none" stroke="#333" stroke-width="1.2" stroke-linecap="round"/><path d="M159.3 120.7 H163.9" stroke="#333" stroke-width="1.05"/><path d="M164.7 121.4 C 166 120.6, 166.6 121.6, 167.2 123.5 C 167.8 125.5, 168.6 127, 170.4 126.2 M170.4 121 C 169.2 120.6, 168.4 121.4, 167.2 123.5 C 166.2 125.3, 165.4 127, 164.1 126.5" fill="none" stroke="#333" stroke-width="1.15" stroke-linecap="round"/><path d="M1284.5 120 L1291 120 L1287.7 126 Z" fill="#555"/><path d="M47 171.2 V186 H32.3 Z" fill="#dedede"/><path d="M218.5 149 V143.9 H1047.5" fill="none" stroke="#8c8c8c" stroke-width="1.8"/><rect x="1047.8" y="140.7" width="10.6" height="10.6" rx="2.4" fill="#fff" stroke="#777" stroke-width="1.2"/><path d="M1050.3 146 H1055.9" stroke="#777" stroke-width="1.6"/><rect x="282.8" y="155.3" width="1.4" height="1.4" fill="#777"/><rect x="416.8" y="155.3" width="1.4" height="1.4" fill="#777"/><rect x="550.8" y="155.3" width="1.4" height="1.4" fill="#777"/><rect x="684.8" y="155.3" width="1.4" height="1.4" fill="#777"/><rect x="818.8" y="155.3" width="1.4" height="1.4" fill="#777"/><rect x="952.8" y="155.3" width="1.4" height="1.4" fill="#777"/><rect x="1.2" y="228.5" width="10.2" height="10.8" rx="2.4" fill="#fff" stroke="#777" stroke-width="1.2"/><path d="M3.6 233.9 H9" stroke="#777" stroke-width="1.6"/><path d="M6.3 231.2 V236.6" stroke="#777" stroke-width="1.6"/><rect x="1.2" y="246.5" width="10.2" height="10.8" rx="2.4" fill="#fff" stroke="#777" stroke-width="1.2"/><path d="M3.6 251.9 H9" stroke="#777" stroke-width="1.6"/><path d="M3.8 257.9 V305.8 H9" fill="none" stroke="#8c8c8c" stroke-width="1.6"/><rect x="1.2" y="310.6" width="10.2" height="10.8" rx="2.4" fill="#fff" stroke="#777" stroke-width="1.2"/><path d="M3.6 316.0 H9" stroke="#777" stroke-width="1.6"/><path d="M3.8 321.9 V386.4 H9" fill="none" stroke="#8c8c8c" stroke-width="1.6"/><rect x="15.4" y="267.3" width="1.4" height="1.4" fill="#777"/><rect x="15.4" y="283.3" width="1.4" height="1.4" fill="#777"/><rect x="15.4" y="299.3" width="1.4" height="1.4" fill="#777"/><rect x="15.4" y="331.3" width="1.4" height="1.4" fill="#777"/><rect x="15.4" y="347.3" width="1.4" height="1.4" fill="#777"/><rect x="15.4" y="363.3" width="1.4" height="1.4" fill="#777"/><rect x="15.4" y="379.3" width="1.4" height="1.4" fill="#777"/></svg>
</body></html>
